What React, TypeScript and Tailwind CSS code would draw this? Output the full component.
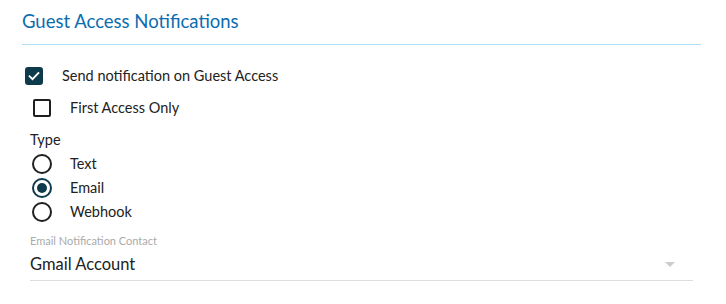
import React from "react";

function Radio({ checked, label }: { checked?: boolean; label: string }) {
  return (
    <div className="flex items-center h-[24px]">
      <div className="w-[20px] h-[20px] rounded-full border-2 border-[#1f1f1f] flex items-center justify-center ml-[2px]" style={checked ? { borderColor: "#0d3b4c" } : undefined}>
        {checked && <div className="w-[10px] h-[10px] rounded-full bg-[#0d3b4c]" />}
      </div>
      <span className="ml-[18px] text-[14.5px] text-[#222]">{label}</span>
    </div>
  );
}

export default function App() {
  return (
    <div className="w-[726px] h-[304px] bg-white relative" style={{ fontFamily: "Lato, 'Noto Sans', sans-serif" }}>
      <div className="pl-[22px] pr-[25px] pt-[7px]">
        <div className="text-[18.5px] leading-[28px] text-[#0b6cb0]">Guest Access Notifications</div>
        <div className="mt-[9px] h-[1px] bg-[#ade0f8]" />
        <div className="mt-[21px] flex items-center ml-[3px] h-[20px]">
          <div className="w-[18px] h-[18px] rounded-[3px] bg-[#0d3b4c] flex items-center justify-center">
            <svg width="14" height="14" viewBox="0 0 24 24" fill="none" stroke="white" strokeWidth="3.2" strokeLinecap="square">
              <path d="M4.5 12.5l5 5L19.5 7" />
            </svg>
          </div>
          <span className="ml-[19px] text-[14.5px] text-[#222]">Send notification on Guest Access</span>
        </div>
        <div className="mt-[12px] flex items-center ml-[11px] h-[20px]">
          <div className="w-[18px] h-[18px] rounded-[2px] border-2 border-[#1f1f1f]" />
          <span className="ml-[19px] text-[14.5px] text-[#222]">First Access Only</span>
        </div>
        <div className="ml-[8px] mt-[10px] text-[14.5px] leading-[24px] text-[#222]">Type</div>
        <div className="ml-[8px] flex flex-col">
          <Radio label="Text" />
          <Radio label="Email" checked />
          <Radio label="Webhook" />
        </div>
        <div className="ml-[8px] mr-[8px] mt-[10px]">
          <div className="text-[11px] leading-[14px] text-[#aaaaaa]">Email Notification Contact</div>
          <div className="flex items-center justify-between border-b border-[#dddddd] pt-[5px] pb-[5px]">
            <span className="text-[16.5px] leading-[22px] text-[#222]">Gmail Account</span>
            <div className="mr-[18px] w-0 h-0 border-l-[5px] border-r-[5px] border-t-[5px] border-l-transparent border-r-transparent border-t-[#cccccc]" />
          </div>
        </div>
      </div>
    </div>
  );
}
